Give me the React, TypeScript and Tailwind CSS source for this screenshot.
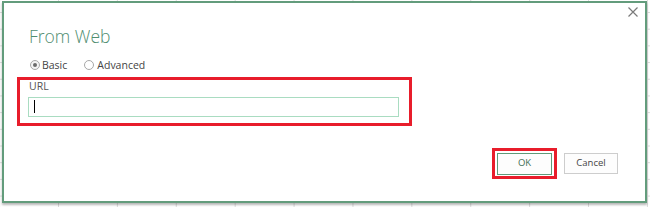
import React from "react";

export default function App() {
  const font = { fontFamily: '"Open Sans", "Noto Sans", sans-serif' };
  return (
    <div
      className="w-[650px] h-[207px] overflow-hidden pt-[1px] pl-[2px] bg-white bg-[linear-gradient(to_right,#dcdcdc_1px,transparent_1px),linear-gradient(to_bottom,#dcdcdc_1px,transparent_1px)] bg-[size:58.9px_16.7px] bg-[position:58px_12px]"
      style={font}
    >
      <div className="w-[645px] h-[202px] border-2 border-[#639c7c] bg-white shadow-[0_2px_2px_rgba(0,0,0,0.28)] flex flex-col">
        {/* header */}
        <div className="h-[20px] flex justify-end pr-[7px]">
          <svg width="10" height="10" viewBox="0 0 10 10" className="mt-[4px]">
            <path d="M0.5 0.5 L9.5 9.5 M9.5 0.5 L0.5 9.5" stroke="#7a7a7a" strokeWidth="1.2" fill="none" />
          </svg>
        </div>
        {/* title */}
        <div className="mt-[2px] ml-[25px] text-[17.5px] leading-[22px] font-light text-[#4f8d6f]">
          From Web
        </div>
        {/* radios */}
        <div className="mt-[11px] ml-[26px] h-[14px] flex items-center text-[10.5px] leading-[14px] text-[#444]">
          <span className="w-[10px] h-[10px] rounded-full border border-[#a8a8a8] bg-[#f4f4f4] flex items-center justify-center">
            <span className="w-[4px] h-[4px] rounded-full bg-[#6b6b6b]" />
          </span>
          <span className="ml-[2px]">Basic</span>
          <span className="ml-[17px] w-[10px] h-[10px] rounded-full border border-[#a8a8a8] bg-white" />
          <span className="ml-[3px]">Advanced</span>
        </div>
        {/* URL group in red box */}
        <div className="mt-[5px] ml-[13px] w-[395px] h-[49px] border-[3px] border-[#e81d2b] flex flex-col">
          <div className="ml-[9px] text-[10.5px] leading-[13px] text-[#555]">URL</div>
          <div className="mt-[4px] ml-[8px] w-[371px] h-[20px] border border-[#a9dcc1] bg-white flex">
            <span className="ml-[5px] mt-[2px] w-px h-[13px] bg-black" />
          </div>
        </div>
        {/* buttons */}
        <div className="mt-[22px] flex justify-end items-center gap-[7px] pr-[27px]">
          <div className="w-[65px] h-[31px] border-[3px] border-[#e81d2b] flex items-center justify-center">
            <button className="w-[55px] h-[22px] border border-[#5f9a79] bg-[#fdfdfd] text-[9.5px] text-[#3f6f56] flex items-center justify-center">
              OK
            </button>
          </div>
          <button className="w-[54px] h-[21px] border border-[#cdcdcd] bg-[#fdfdfd] text-[9.5px] text-[#444] flex items-center justify-center">
            Cancel
          </button>
        </div>
      </div>
    </div>
  );
}
